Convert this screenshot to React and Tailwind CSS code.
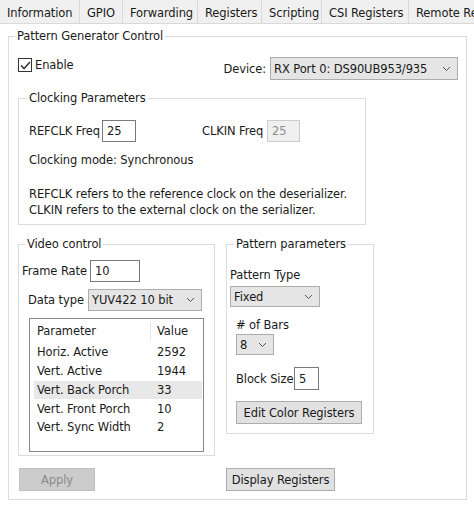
import React from "react";

const tabs = [
  { label: "Information", w: "w-[80px]" },
  { label: "GPIO", w: "w-[43px]" },
  { label: "Forwarding", w: "w-[75px]" },
  { label: "Registers", w: "w-[64px]" },
  { label: "Scripting", w: "w-[60px]" },
  { label: "CSI Registers", w: "w-[87px]" },
  { label: "Remote Registers", w: "w-[110px]" },
];

const rows = [
  { name: "Horiz. Active", value: "2592" },
  { name: "Vert. Active", value: "1944" },
  { name: "Vert. Back Porch", value: "33", selected: true },
  { name: "Vert. Front Porch", value: "10" },
  { name: "Vert. Sync Width", value: "2" },
];

const Chevron = () => (
  <svg width="9" height="6" viewBox="0 0 9 6" className="shrink-0">
    <polyline points="1,1 4.5,4.5 8,1" fill="none" stroke="#555" strokeWidth="1" />
  </svg>
);

// windows style combo box
const Combo = ({ value, className }) => (
  <div
    className={`flex items-center justify-between bg-[#e5e5e5] border border-[#acacac] pl-[3px] pr-[6px] ${className}`}
  >
    <span className="whitespace-nowrap">{value}</span>
    <Chevron />
  </div>
);

const TextBox = ({ value, className, disabled }) => (
  <div
    className={`flex items-center px-[4px] border shrink-0 ${
      disabled ? "bg-[#f0f0f0] border-[#cccccc] text-[#8d8d8d]" : "bg-white border-[#7a7a7a]"
    } ${className}`}
  >
    {value}
  </div>
);

const Button = ({ children, className, disabled }) => (
  <div
    className={`flex items-center justify-center border whitespace-nowrap ${
      disabled ? "bg-[#cccccc] border-[#bfbfbf] text-[#8a8a8a]" : "bg-[#e1e1e1] border-[#adadad]"
    } ${className}`}
  >
    {children}
  </div>
);

const Group = ({ title, className, legendClass, children }) => (
  <fieldset className={`border border-[#dcdcdc] ${className}`}>
    <legend className={`px-[2px] leading-[16px] whitespace-nowrap ${legendClass}`}>{title}</legend>
    {children}
  </fieldset>
);

export default function App() {
  return (
    <div
      className="w-[474px] h-[507px] bg-white text-[11.5px] leading-[16px] tracking-[-0.1px] text-[#1a1a1a] overflow-hidden whitespace-nowrap"
      style={{ fontFamily: '"DejaVu Sans", Tahoma, sans-serif' }}
    >
      {/* Tabs */}
      <div className="flex h-[24px] bg-[#f0f0f0] border-b border-[#d9d9d9]">
        {tabs.map((t) => (
          <div
            key={t.label}
            className={`${t.w} shrink-0 flex items-center pl-[7px] pt-[2px] border-r border-[#d9d9d9] overflow-hidden`}
          >
            {t.label}
          </div>
        ))}
      </div>

      <div className="pl-[8px] pt-[4px]">
        <Group title="Pattern Generator Control" className="w-[459px] h-[472px] pl-[9px] pr-[8px]" legendClass="ml-[-3px]">
          {/* Enable + Device */}
          <div className="flex items-start mt-[13px] h-[23px]">
            <div className="flex items-center gap-[3px]">
              <div className="w-[14px] h-[14px] border border-[#333] bg-white flex items-center justify-center">
                <svg width="11" height="9" viewBox="0 0 11 9">
                  <polyline points="1,4.5 4,7.5 10,1" fill="none" stroke="#222" strokeWidth="1.3" />
                </svg>
              </div>
              <span>Enable</span>
            </div>
            <div className="ml-auto flex items-center gap-[4px]">
              <span>Device:</span>
              <Combo value="RX Port 0: DS90UB953/935" className="w-[188px] h-[23px]" />
            </div>
          </div>

          {/* Clocking parameters */}
          <Group title="Clocking Parameters" className="mt-[10px] w-[348px] pl-[10px] pb-[6px]" legendClass="ml-[-2px]">
            <div className="flex items-center mt-[14px] h-[22px]">
              <span className="w-[73px] shrink-0">REFCLK Freq</span>
              <TextBox value="25" className="w-[34px] h-[22px]" />
              <span className="ml-[66px] w-[65px] shrink-0">CLKIN Freq</span>
              <TextBox value="25" disabled className="w-[33px] h-[22px]" />
            </div>
            <div className="mt-[10px]">Clocking mode: Synchronous</div>
            <div className="mt-[18px]">
              <div>REFCLK refers to the reference clock on the deserializer.</div>
              <div>CLKIN refers to the external clock on the serializer.</div>
            </div>
          </Group>

          <div className="flex items-start mt-[11px]">
            {/* Video control */}
            <Group title="Video control" className="w-[197px] h-[220px] pl-[3px]" legendClass="ml-[3px]">
              <div className="flex items-center mt-[8px] h-[22px]">
                <span className="w-[68px] shrink-0">Frame Rate</span>
                <TextBox value="10" className="w-[50px] h-[22px]" />
              </div>
              <div className="flex items-center mt-[7px] h-[22px] pl-[6px]">
                <span className="w-[60px] shrink-0">Data type</span>
                <Combo value="YUV422 10 bit" className="w-[114px] h-[22px]" />
              </div>
              <div className="mt-[7px] ml-[7px] w-[175px] h-[134px] border border-[#828790] bg-white">
                <div className="flex h-[22px] items-center mt-[1px] ml-[4px] mr-[1px]">
                  <span className="w-[116px] pl-[3px] h-[22px] flex items-center">Parameter</span>
                  <span className="border-l border-[#e5e5e5] h-[18px]" />
                  <span className="pl-[6px]">Value</span>
                </div>
                <div className="mt-[1px] ml-[4px] mr-[1px]">
                  {rows.map((r) => (
                    <div
                      key={r.name}
                      className={`flex items-center h-[18.75px] ${r.selected ? "bg-[#e8e8e8]" : ""}`}
                    >
                      <span className="w-[123px] pl-[3px]">{r.name}</span>
                      <span>{r.value}</span>
                    </div>
                  ))}
                </div>
              </div>
            </Group>

            {/* Pattern parameters */}
            <Group title="Pattern parameters" className="ml-[11px] w-[148px] h-[198px] pl-[3px]" legendClass="ml-[4px]">
              <div className="mt-[15px]">Pattern Type</div>
              <Combo value="Fixed" className="mt-[3px] w-[90px] h-[21px]" />
              <div className="ml-[6px]">
                <div className="mt-[10px]"># of Bars</div>
                <Combo value="8" className="mt-[1px] w-[38px] h-[21px]" />
                <div className="flex items-center mt-[12px] h-[23px]">
                  <span className="w-[58px] shrink-0">Block Size</span>
                  <TextBox value="5" className="w-[25px] h-[23px]" />
                </div>
                <Button className="mt-[11px] w-[126px] h-[23px]">Edit Color Registers</Button>
              </div>
            </Group>
          </div>

          {/* Bottom buttons */}
          <div className="flex items-center mt-[12px]">
            <Button disabled className="ml-[1px] w-[76px] h-[23px]">Apply</Button>
            <Button className="ml-[131px] w-[109px] h-[23px]">Display Registers</Button>
          </div>
        </Group>
      </div>
    </div>
  );
}
